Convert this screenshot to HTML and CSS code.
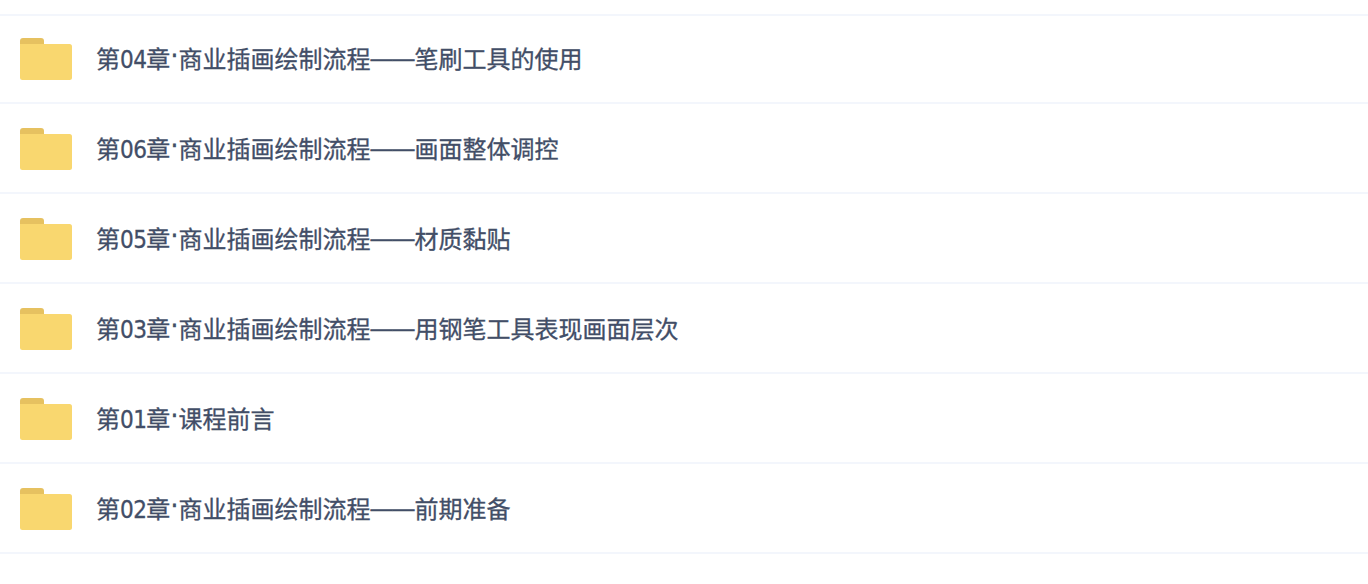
FILE: index.html
```html
<!DOCTYPE html>
<html lang="zh-CN">
<head>
    <meta charset="utf-8">
    <title>商业插画绘制流程</title>
    <link rel="stylesheet" href="styles.css">
</head>
<body>
    <svg class="defs" width="0" height="0">
        <symbol id="folder" viewBox="0 0 52 42">
            <path fill="#e6c160" d="M0 10V3Q0 0 3 0H21Q24 0 24 3V10Z"/>
            <path fill="#f9d76f" d="M0 6H49.500Q52 6 52 8.500V39.500Q52 42 49.500 42H2.500Q0 42 0 39.500Z"/>
        </symbol>
    </svg>
    <ul class="file-list">
        <li class="file"><svg class="folder"><use href="#folder"/></svg><span class="name">第<b>04</b>章<i>·</i>商业插画绘制流程<em>——</em>笔刷工具的使用</span></li>
        <li class="file"><svg class="folder"><use href="#folder"/></svg><span class="name">第<b>06</b>章<i>·</i>商业插画绘制流程<em>——</em>画面整体调控</span></li>
        <li class="file"><svg class="folder"><use href="#folder"/></svg><span class="name">第<b>05</b>章<i>·</i>商业插画绘制流程<em>——</em>材质黏贴</span></li>
        <li class="file"><svg class="folder"><use href="#folder"/></svg><span class="name">第<b>03</b>章<i>·</i>商业插画绘制流程<em>——</em>用钢笔工具表现画面层次</span></li>
        <li class="file"><svg class="folder"><use href="#folder"/></svg><span class="name">第<b>01</b>章<i>·</i>课程前言</span></li>
        <li class="file"><svg class="folder"><use href="#folder"/></svg><span class="name">第<b>02</b>章<i>·</i>商业插画绘制流程<em>——</em>前期准备</span></li>
    </ul>
</body>
</html>
```
FILE: styles.css
```css
body {
    margin: 0;
    background: #fff;
    color: #424e67;
    font: 24px/36px "Noto Sans", "Noto Sans CJK SC", sans-serif;
    overflow: hidden;
}
.defs {
    display: block;
}
.file-list {
    list-style: none;
    margin: 14px 0 0;
    padding: 0;
    border-top: 2px solid #f3f6fc;
}
.file {
    display: flex;
    align-items: center;
    box-sizing: border-box;
    height: 90px;
    padding: 2px 20px 0;
    border-bottom: 2px solid #f3f6fc;
}
.file:first-child {
    height: 88px;
    padding-top: 0;
}
.folder {
    width: 52px;
    height: 42px;
    margin-right: 24px;
}
.name {
    white-space: nowrap;
    -webkit-text-stroke: 0.3px #424e67;
}
.name b, .name i, .name em {
    font-weight: 400;
    font-style: normal;
    line-height: 1;
}
.name b {
    font-family: "DejaVu Sans Condensed", "DejaVu Sans", sans-serif;
    font-stretch: condensed;
    letter-spacing: -0.6px;
}
.name i {
    display: inline-block;
    width: 8.200px;
    font-family: "DejaVu Sans Condensed", "DejaVu Sans", sans-serif;
    font-stretch: condensed;
    text-align: center;
    vertical-align: 4px;
    -webkit-text-stroke: 0.7px #424e67;
}
.name em {
    font-family: "Liberation Sans", sans-serif;
    font-size: 22px;
    vertical-align: 2px;
}
```
